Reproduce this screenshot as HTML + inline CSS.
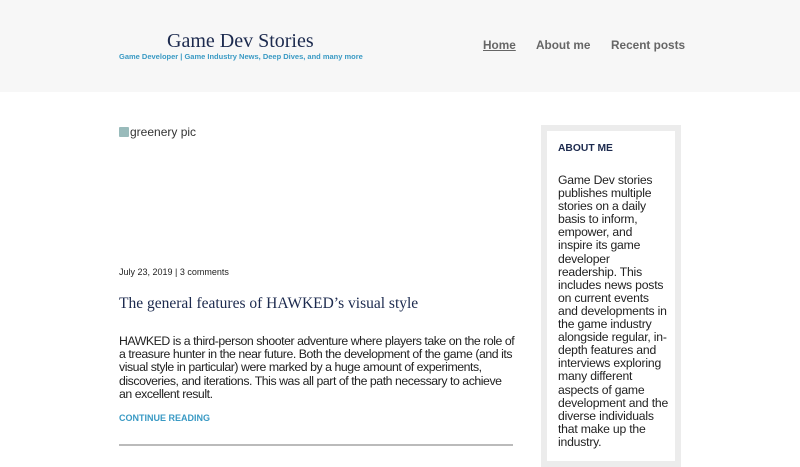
<!DOCTYPE html>
<html><head><style>
body{margin:0;width:800px;height:450px;overflow:hidden;background:#fff;font-family:"Liberation Sans",sans-serif;position:relative}
.a{position:absolute;white-space:nowrap}
</style></head><body>
<div class="a" style="left:0;top:0;width:800px;height:92px;background:#f7f7f7"></div>
<div class="a" style="left:167px;top:30px;font-family:'Liberation Serif',serif;font-size:20px;color:#1c2a4e">Game Dev Stories</div>
<div class="a" style="left:119px;top:52px;font-size:7.5px;font-weight:bold;color:#3a9ac4">Game Developer | Game Industry News, Deep Dives, and many more</div>
<div class="a" style="left:483px;top:38px;font-size:11.8px;font-weight:bold;color:#666;text-decoration:underline">Home</div>
<div class="a" style="left:536px;top:38px;font-size:11.8px;font-weight:bold;color:#666">About me</div>
<div class="a" style="left:611px;top:38px;font-size:11.8px;font-weight:bold;color:#666">Recent posts</div>

<div class="a" style="left:119px;top:125px;font-size:12px;color:#333"><span style="display:inline-block;width:10px;height:10px;background:#9bb;vertical-align:-1px;margin-right:1px;border-radius:1px"></span>greenery pic</div>
<div class="a" style="left:119px;top:267px;font-size:9px;color:#222">July 23, 2019 | 3 comments</div>
<div class="a" style="left:119px;top:295px;font-family:'Liberation Serif',serif;font-size:15.5px;color:#1c2a4e">The general features of HAWKED’s visual style</div>
<div class="a" style="left:119px;top:335px;width:396px;white-space:normal;font-size:12.3px;letter-spacing:-0.45px;line-height:13.2px;color:#222">HAWKED is a third-person shooter adventure where players take on the role of a treasure hunter in the near future. Both the development of the game (and its visual style in particular) were marked by a huge amount of experiments, discoveries, and iterations. This was all part of the path necessary to achieve an excellent result.</div>
<div class="a" style="left:119px;top:413px;font-size:9px;font-weight:bold;color:#3a9ac4">CONTINUE READING</div>
<div class="a" style="left:119px;top:444px;width:394px;height:2px;background:#bbb"></div>

<div class="a" style="left:541px;top:125px;width:128px;height:330px;border:6px solid #ececec;background:#fff"></div>
<div class="a" style="left:558px;top:143px;font-size:10.3px;font-weight:bold;color:#1c2a4e">ABOUT ME</div>
<div class="a" style="left:558px;top:174px;width:111px;white-space:normal;font-size:12.2px;letter-spacing:-0.2px;line-height:13.1px;color:#222">Game Dev stories publishes multiple stories on a daily basis to inform, empower, and inspire its game developer readership. This includes news posts on current events and developments in the game industry alongside regular, in-depth features and interviews exploring many different aspects of game development and the diverse individuals that make up the industry.</div>
</body></html>
